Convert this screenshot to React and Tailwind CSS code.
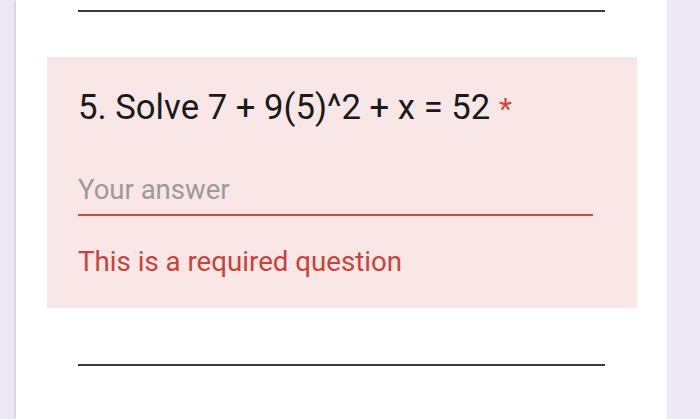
export default function App() {
  return (
    <div className="w-[700px] h-[419px] bg-[#ece8f4] flex overflow-hidden font-['Roboto',sans-serif]">
      {/* Left gutter */}
      <div className="w-[16px] shrink-0 bg-[#ebe7f3]" />

      {/* Form card */}
      <div className="w-[651px] shrink-0 bg-white shadow-[0_0_3px_rgba(0,0,0,0.25)] flex flex-col">
        {/* Previous question divider */}
        <div className="pt-[10px] px-[62px]">
          <div className="h-[2px] bg-[#3c3c3c]" />
        </div>

        {/* Question (error state) */}
        <div className="mt-[45px] ml-[31px] w-[590px] h-[251px] bg-[#f9e6e6] pl-[31px] pt-[30px]">
          <h2 className="text-[34.7px] leading-[40px] text-[#1a1a1a]">
            5. Solve 7 + 9(5)^2 + x = 52{' '}
            <span className="text-[30px] leading-none text-[#d0453c]">*</span>
          </h2>

          <div className="mt-[47px] w-[515px]">
            <div className="text-[27.5px] leading-[32px] text-[#9c9a9a]">Your answer</div>
            <div className="mt-[8px] h-[2px] bg-[#cf4a40]" />
          </div>

          <p className="mt-[30px] text-[27.7px] leading-[32px] text-[#c8433a]">
            This is a required question
          </p>
        </div>

        {/* Next question divider */}
        <div className="mt-[56px] px-[62px]">
          <div className="h-[2px] bg-[#3c3c3c]" />
        </div>
      </div>

      {/* Right gutter */}
      <div className="flex-1 bg-[#ece8f4]" />
    </div>
  );
}
